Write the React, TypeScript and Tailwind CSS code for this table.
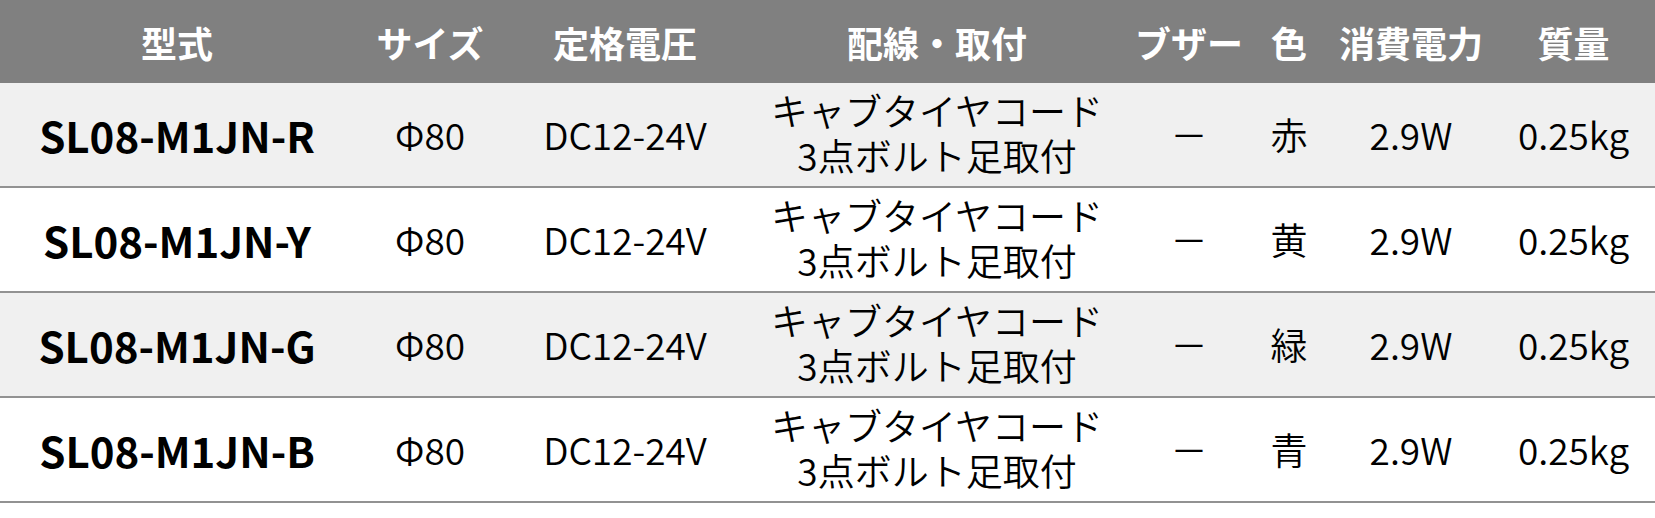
const FONT = "font-['Noto_Sans_CJK_JP','Noto_Sans',sans-serif]";

const COLS = [
  "w-[354px]",
  "w-[152px]",
  "w-[238px]",
  "w-[386px]",
  "w-[118px]",
  "w-[82px]",
  "w-[162px]",
  "w-[163px]",
];

const HEAD = ["型式", "サイズ", "定格電圧", "配線・取付", "ブザー", "色", "消費電力", "質量"];

const ROWS = [
  { model: "SL08-M1JN-R", color: "赤" },
  { model: "SL08-M1JN-Y", color: "黄" },
  { model: "SL08-M1JN-G", color: "緑" },
  { model: "SL08-M1JN-B", color: "青" },
];

const cell = "flex shrink-0 items-center justify-center whitespace-nowrap text-[37px] font-[350] leading-none";

export default function App() {
  return (
    <div className={`w-[1655px] h-[518px] bg-white text-black ${FONT}`}>
      <div className="flex h-[83px] bg-[#808080] text-white">
        {HEAD.map((h, i) => (
          <div
            key={h}
            className={`${COLS[i]} flex shrink-0 items-center justify-center whitespace-nowrap text-[36px] font-bold leading-none`}
          >
            {h}
          </div>
        ))}
      </div>

      {ROWS.map((r, idx) => (
        <div
          key={r.model}
          className={`flex h-[105px] border-b-2 border-[#929292] ${idx % 2 === 0 ? "bg-[#f0f0f0]" : "bg-white"}`}
        >
          <div className={`${COLS[0]} flex shrink-0 items-center justify-center text-[42px] font-bold leading-none`}>
            {r.model}
          </div>
          <div className={`${COLS[1]} ${cell}`}>Φ80</div>
          <div className={`${COLS[2]} ${cell}`}>DC12-24V</div>
          <div className={`${COLS[3]} ${cell} flex-col pb-1`}>
            <span className="leading-[45px]">キャブタイヤコード</span>
            <span className="leading-[45px]">3点ボルト足取付</span>
          </div>
          <div className={`${COLS[4]} ${cell} text-[28px]`}>－</div>
          <div className={`${COLS[5]} ${cell}`}>{r.color}</div>
          <div className={`${COLS[6]} ${cell}`}>2.9W</div>
          <div className={`${COLS[7]} ${cell}`}>0.25kg</div>
        </div>
      ))}
    </div>
  );
}
